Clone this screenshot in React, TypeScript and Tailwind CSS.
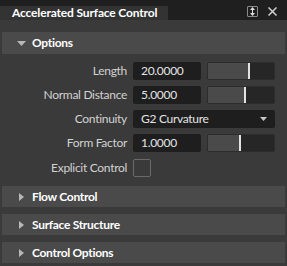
import React from "react";

const font = { fontFamily: 'Lato, "Open Sans", sans-serif' };

function Header({ title }: { title: string }) {
  return (
    <div className="mx-[2px] h-[21px] bg-[#4a4a4a] flex items-center">
      <div className="w-[30px] flex justify-center pl-[8px]">
        <svg width="5" height="8" viewBox="0 0 5 8">
          <path d="M0 0 L5 4 L0 8 Z" fill="#b8b8b8" />
        </svg>
      </div>
      <span className="text-[12px] tracking-[-0.3px] font-bold text-white leading-none whitespace-nowrap">{title}</span>
    </div>
  );
}

function Slider({ pos }: { pos: number }) {
  return (
    <div className="w-[68px] h-[18px] rounded-[2px] border border-[#2c2c2c] bg-[#262626] flex">
      <div className="h-full bg-[#4a4a4a]" style={{ width: pos }} />
      <div className="w-[2px] h-full bg-[#e2e2e2]" />
    </div>
  );
}

function Row({ label, children }: { label: string; children: React.ReactNode }) {
  return (
    <div className="flex items-center h-[18px]">
      <div className="w-[127px] text-right text-[12px] tracking-[-0.3px] text-[#d2d2d2] leading-none whitespace-nowrap">{label}</div>
      <div className="ml-[6px] flex gap-[6px] items-center">{children}</div>
    </div>
  );
}

function NumInput({ value }: { value: string }) {
  return (
    <div className="w-[68px] h-[18px] rounded-[2px] bg-[#1e1e1e] text-[12px] tracking-[-0.3px] text-[#e4e4e4] flex items-center px-[8px] leading-none">
      {value}
    </div>
  );
}

export default function App() {
  return (
    <div className="w-[287px] h-[266px] bg-[#3a3a3a] overflow-hidden" style={font}>
      <div className="h-[20px] bg-[#1f1f1f] flex items-end justify-between">
        <div className="w-[168px] h-[14px] bg-[#333333] flex items-center pl-[12px]">
          <span className="text-[12px] tracking-[-0.15px] font-bold text-white leading-none whitespace-nowrap">Accelerated Surface Control</span>
        </div>
        <div className="flex items-center gap-[10px] pr-[10px] self-center mt-[3px]">
          <div className="w-[11px] h-[11px] border border-[#8a8a8a] rounded-[1px] flex items-center justify-center">
            <svg width="5" height="9" viewBox="0 0 5 9">
              <path d="M0 3 L2.5 0 L5 3 Z M0 6 L2.5 9 L5 6 Z" fill="#e0e0e0" />
              <rect x="2" y="3" width="1" height="3" fill="#e0e0e0" />
            </svg>
          </div>
          <svg width="9" height="9" viewBox="0 0 9 9">
            <path d="M0.5 0.5 L8.5 8.5 M8.5 0.5 L0.5 8.5" stroke="#d0d0d0" strokeWidth="1.5" />
          </svg>
        </div>
      </div>
      <div className="pt-[12px]">
        <div className="h-[22px] mx-[2px] bg-[#4a4a4a] flex items-center">
          <div className="w-[30px] flex justify-center pl-[8px]">
            <svg width="9" height="5" viewBox="0 0 9 5">
              <path d="M0 0 L9 0 L4.5 5 Z" fill="#b8b8b8" />
            </svg>
          </div>
          <span className="text-[12px] tracking-[-0.3px] font-bold text-white leading-none">Options</span>
        </div>
        <div className="flex flex-col gap-[6px] pt-[8px]">
          <Row label="Length">
            <NumInput value="20.0000" />
            <Slider pos={40} />
          </Row>
          <Row label="Normal Distance">
            <NumInput value="5.0000" />
            <Slider pos={36} />
          </Row>
          <Row label="Continuity">
            <div className="w-[142px] h-[18px] rounded-[2px] bg-[#1e1e1e] text-[12px] tracking-[-0.3px] text-[#e4e4e4] flex items-center justify-between px-[8px] leading-none">
              <span>G2 Curvature</span>
              <svg width="7" height="4" viewBox="0 0 7 4">
                <path d="M0 0 L7 0 L3.5 4 Z" fill="#c8c8c8" />
              </svg>
            </div>
          </Row>
          <Row label="Form Factor">
            <NumInput value="1.0000" />
            <Slider pos={31} />
          </Row>
          <div className="flex items-center h-[20px]">
            <div className="w-[127px] text-right text-[12px] tracking-[-0.3px] text-[#d2d2d2] leading-none">Explicit Control</div>
            <div className="ml-[6px] w-[18px] h-[18px] rounded-[2px] border border-[#6a6a6a] bg-[#3a3a3a]" />
          </div>
        </div>
        <div className="flex flex-col gap-[7px] pt-[8px]">
          <Header title="Flow Control" />
          <Header title="Surface Structure" />
          <Header title="Control Options" />
        </div>
      </div>
    </div>
  );
}
